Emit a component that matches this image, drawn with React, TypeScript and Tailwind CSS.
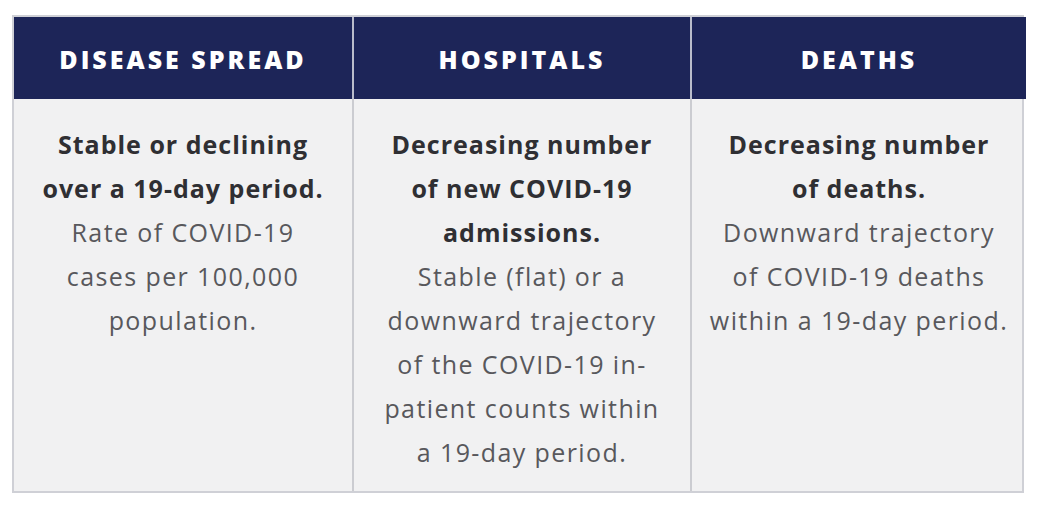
const columns = [
  {
    title: "DISEASE SPREAD",
    bold: ["Stable or declining", "over a 19-day period."],
    text: ["Rate of COVID-19", "cases per 100,000", "population."],
  },
  {
    title: "HOSPITALS",
    bold: ["Decreasing number", "of new COVID-19", "admissions."],
    text: [
      "Stable (flat) or a",
      "downward trajectory",
      "of the COVID-19 in-",
      "patient counts within",
      "a 19-day period.",
    ],
  },
  {
    title: "DEATHS",
    bold: ["Decreasing number", "of deaths."],
    text: ["Downward trajectory", "of COVID-19 deaths", "within a 19-day period."],
  },
]

export default function App() {
  return (
    <div className="h-[506px] w-[1041px] bg-white pl-[12px] pt-[15px] font-['Open_Sans',sans-serif]">
      <div className="grid h-[478px] w-[1012px] grid-cols-[338px_338px_336px] grid-rows-[82px_1fr] border-2 border-[#cfd0d6] bg-[#f1f1f2]">
        {columns.map((c, i) => (
          <div
            key={c.title}
            className={`flex items-center justify-center bg-[#1d2558] pt-[4px] text-[25px] font-extrabold tracking-[3px] text-white ${
              i > 0 ? "border-l-2 border-[#b9bccb]" : ""
            }`}
          >
            {c.title}
          </div>
        ))}
        {columns.map((c, i) => (
          <div
            key={c.title + "-body"}
            className={`pt-[23px] text-center text-[25px] leading-[44px] whitespace-nowrap ${
              i > 0 ? "border-l-2 border-[#cbccd1]" : ""
            }`}
          >
            {c.bold.map((l) => (
              <div key={l} className="font-bold tracking-[1px] text-[#2f2f33]">
                {l}
              </div>
            ))}
            {c.text.map((l) => (
              <div key={l} className="tracking-[1.4px] text-[#58585c]">
                {l}
              </div>
            ))}
          </div>
        ))}
      </div>
    </div>
  )
}
